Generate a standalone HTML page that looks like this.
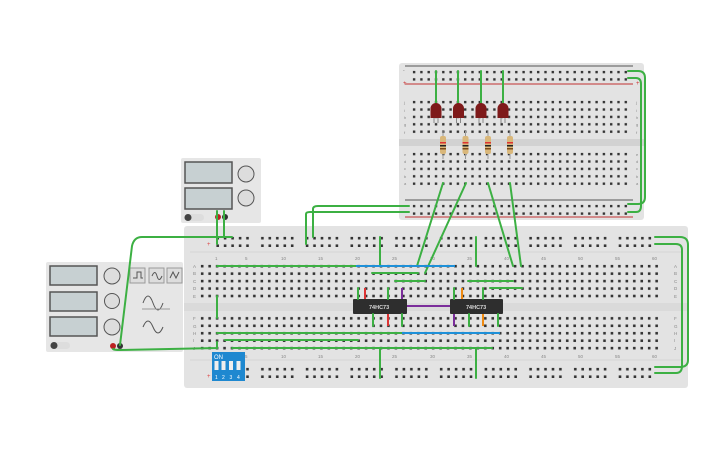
<!DOCTYPE html>
<html><head><meta charset="utf-8"><style>
html,body{margin:0;padding:0;background:#fff;width:725px;height:453px;overflow:hidden}
svg{display:block}
text{font-family:"Liberation Sans",sans-serif}
</style></head><body>
<svg width="725" height="453" viewBox="0 0 725 453" xmlns="http://www.w3.org/2000/svg">
<defs>
<pattern id="mg" x="198.5" y="262.5" width="7.45" height="7.45" patternUnits="userSpaceOnUse"><rect x="2.4" y="2.4" width="2.6" height="2.6" fill="#333"/></pattern>
<pattern id="mr" x="214" y="234.5" width="44.7" height="7.5" patternUnits="userSpaceOnUse">
<rect x="2.4" y="2.4" width="2.6" height="2.6" fill="#333"/><rect x="9.8" y="2.4" width="2.6" height="2.6" fill="#333"/><rect x="17.3" y="2.4" width="2.6" height="2.6" fill="#333"/><rect x="24.8" y="2.4" width="2.6" height="2.6" fill="#333"/><rect x="32.2" y="2.4" width="2.6" height="2.6" fill="#333"/></pattern>
<pattern id="mr2" x="214" y="365.5" width="44.7" height="7.5" patternUnits="userSpaceOnUse">
<rect x="2.4" y="2.4" width="2.6" height="2.6" fill="#333"/><rect x="9.8" y="2.4" width="2.6" height="2.6" fill="#333"/><rect x="17.3" y="2.4" width="2.6" height="2.6" fill="#333"/><rect x="24.8" y="2.4" width="2.6" height="2.6" fill="#333"/><rect x="32.2" y="2.4" width="2.6" height="2.6" fill="#333"/></pattern>
<pattern id="sgR" x="410.5" y="68.5" width="7.3" height="7.3" patternUnits="userSpaceOnUse"><rect x="2.4" y="2.4" width="2.4" height="2.4" fill="#333"/></pattern>
<pattern id="sgA" x="410.5" y="98.5" width="7.3" height="7.4" patternUnits="userSpaceOnUse"><rect x="2.4" y="2.4" width="2.4" height="2.4" fill="#333"/></pattern>
<pattern id="sgB" x="410.5" y="150.5" width="7.3" height="7.4" patternUnits="userSpaceOnUse"><rect x="2.4" y="2.4" width="2.4" height="2.4" fill="#333"/></pattern>
<pattern id="sgR2" x="410.5" y="202.5" width="7.3" height="7.5" patternUnits="userSpaceOnUse"><rect x="2.4" y="2.4" width="2.4" height="2.4" fill="#333"/></pattern>
</defs>

<!-- small breadboard -->
<rect x="399" y="63" width="245" height="157" rx="3" fill="#e3e3e3"/>
<rect x="399" y="139" width="245" height="7" fill="#d2d2d2"/>
<line x1="405" y1="66" x2="633" y2="66" stroke="#555" stroke-width="1"/>
<line x1="405" y1="84" x2="633" y2="84" stroke="#c03030" stroke-width="1"/>
<line x1="405" y1="200" x2="633" y2="200" stroke="#555" stroke-width="1"/>
<line x1="405" y1="217" x2="633" y2="217" stroke="#c03030" stroke-width="1"/>
<rect x="410.5" y="68.5" width="219" height="14.6" fill="url(#sgR)"/>
<rect x="410.5" y="98.5" width="219" height="37" fill="url(#sgA)"/>
<rect x="410.5" y="150.5" width="219" height="37" fill="url(#sgB)"/>
<rect x="410.5" y="202.5" width="219" height="15" fill="url(#sgR2)"/>
<text x="403" y="72" font-size="5" fill="#777">-</text><text x="403" y="85" font-size="6" fill="#c33">+</text>
<text x="636" y="72" font-size="5" fill="#777">-</text><text x="636" y="85" font-size="6" fill="#c33">+</text>
<g font-size="4" fill="#888"><text x="404" y="104">j</text><text x="404" y="112">i</text><text x="404" y="119">h</text><text x="404" y="126">g</text><text x="404" y="134">f</text><text x="404" y="156">e</text><text x="404" y="163">d</text><text x="404" y="170">c</text><text x="404" y="178">b</text><text x="404" y="185">a</text>
<text x="636" y="104">j</text><text x="636" y="112">i</text><text x="636" y="119">h</text><text x="636" y="126">g</text><text x="636" y="134">f</text><text x="636" y="156">e</text><text x="636" y="163">d</text><text x="636" y="170">c</text><text x="636" y="178">b</text><text x="636" y="185">a</text></g>

<!-- main breadboard -->
<rect x="184" y="226" width="504" height="162" rx="3" fill="#e3e3e3"/>
<line x1="190" y1="252" x2="682" y2="252" stroke="#d6d6d6"/>
<line x1="190" y1="360" x2="682" y2="360" stroke="#d6d6d6"/>
<rect x="184" y="303" width="504" height="8" fill="#dadada"/>
<rect x="214" y="234.5" width="448" height="15" fill="url(#mr)"/>
<rect x="214" y="365.5" width="448" height="15" fill="url(#mr2)"/>
<rect x="198.5" y="262.5" width="463" height="37" fill="url(#mg)"/>
<rect x="198.5" y="314.5" width="463" height="37" fill="url(#mg)"/>
<text x="207" y="246" font-size="6" fill="#d44">+</text><text x="207" y="378" font-size="6" fill="#d44">+</text>
<g font-size="4.5" fill="#888">
<text x="215" y="260">1</text><text x="245" y="260">5</text><text x="281" y="260">10</text><text x="318" y="260">15</text><text x="355" y="260">20</text><text x="392" y="260">25</text><text x="430" y="260">30</text><text x="467" y="260">35</text><text x="504" y="260">40</text><text x="541" y="260">45</text><text x="578" y="260">50</text><text x="615" y="260">55</text><text x="652" y="260">60</text>
<text x="245" y="358">5</text><text x="281" y="358">10</text><text x="318" y="358">15</text><text x="355" y="358">20</text><text x="392" y="358">25</text><text x="430" y="358">30</text><text x="467" y="358">35</text><text x="504" y="358">40</text><text x="541" y="358">45</text><text x="578" y="358">50</text><text x="615" y="358">55</text><text x="652" y="358">60</text>
<text x="193" y="268">A</text><text x="193" y="275">B</text><text x="193" y="283">C</text><text x="193" y="290">D</text><text x="193" y="298">E</text><text x="193" y="320">F</text><text x="193" y="328">G</text><text x="193" y="335">H</text><text x="193" y="342">I</text><text x="193" y="350">J</text>
<text x="674" y="268">A</text><text x="674" y="275">B</text><text x="674" y="283">C</text><text x="674" y="290">D</text><text x="674" y="298">E</text><text x="674" y="320">F</text><text x="674" y="328">G</text><text x="674" y="335">H</text><text x="674" y="342">I</text><text x="674" y="350">J</text></g>

<!-- top power supply -->
<rect x="181" y="158" width="80" height="65" rx="2" fill="#e6e6e6"/>
<rect x="185" y="162" width="47" height="21" fill="#c7d0d2" stroke="#555" stroke-width="1.5"/>
<rect x="185" y="188" width="47" height="21" fill="#c7d0d2" stroke="#555" stroke-width="1.5"/>
<circle cx="246" cy="174" r="8" fill="#ddd" stroke="#555"/>
<circle cx="246" cy="198" r="8" fill="#ddd" stroke="#555"/>
<rect x="184" y="214" width="20" height="7" rx="3.5" fill="#ddd"/><circle cx="188" cy="217.5" r="3.5" fill="#444"/>
<circle cx="218" cy="217" r="3" fill="#b22"/><circle cx="225" cy="217" r="3" fill="#333"/>

<!-- bottom function generator -->
<rect x="46" y="262" width="137" height="90" rx="2" fill="#e6e6e6"/>
<rect x="50" y="266" width="47" height="19" fill="#c7d0d2" stroke="#555" stroke-width="1.5"/>
<rect x="50" y="292" width="47" height="19" fill="#c7d0d2" stroke="#555" stroke-width="1.5"/>
<rect x="50" y="317" width="47" height="19" fill="#c7d0d2" stroke="#555" stroke-width="1.5"/>
<circle cx="112" cy="276" r="8" fill="#ddd" stroke="#555"/>
<circle cx="112" cy="301" r="7.5" fill="#ddd" stroke="#555"/>
<circle cx="112" cy="327" r="8" fill="#ddd" stroke="#555"/>
<rect x="130" y="268" width="15" height="15" fill="#ddd" stroke="#999"/>
<rect x="149" y="268" width="15" height="15" fill="#ddd" stroke="#999"/>
<rect x="167" y="268" width="15" height="15" fill="#ddd" stroke="#999"/>
<path d="M133 278h4v-6h4v6h2" fill="none" stroke="#555"/>
<path d="M152 276q3-7 5 0t5 0" fill="none" stroke="#555"/>
<path d="M170 278l3-6 3 6 3-6" fill="none" stroke="#555"/>
<path d="M143 303q5-14 10 0t10 0" fill="none" stroke="#555"/><line x1="142" y1="309" x2="170" y2="309" stroke="#999"/>
<path d="M143 327q5-12 10 0t10 0" fill="none" stroke="#555"/>
<rect x="50" y="342" width="20" height="7" rx="3.5" fill="#ddd"/><circle cx="54" cy="345.5" r="3.5" fill="#444"/>
<circle cx="113" cy="346" r="3" fill="#b22"/><circle cx="120" cy="346" r="3" fill="#333"/>

<!-- DIP switch -->
<rect x="212" y="352" width="33" height="29" fill="#1e88d0"/>
<text x="214" y="359" font-size="6" fill="#fff">ON</text>
<g fill="#eee"><rect x="214.5" y="361" width="4" height="9"/><rect x="221.5" y="361" width="4" height="9"/><rect x="229" y="361" width="4" height="9"/><rect x="236.5" y="361" width="4" height="9"/></g>
<g font-size="5" fill="#fff"><text x="215" y="379">1</text><text x="222" y="379">2</text><text x="229.5" y="379">3</text><text x="237" y="379">4</text></g>

<!-- chips -->
<rect x="353" y="299" width="54" height="15" rx="1" fill="#2e2e2e"/>
<text x="369" y="309" font-size="5.5" fill="#ddd" font-weight="bold">74HC73</text>
<rect x="450" y="299" width="53" height="15" rx="1" fill="#2e2e2e"/>
<text x="466" y="309" font-size="5.5" fill="#ddd" font-weight="bold">74HC73</text>

<!-- wires -->
<g fill="none" stroke="#3cb043" stroke-width="2" stroke-linecap="round">
<path d="M217 211V244M224 211V237"/>
<path d="M120 345L132 246Q134 237 142 237H232"/>
<path d="M113 349Q114 350 120 350L217 348V342"/>
<path d="M232 348H492"/>
<path d="M306 244V214Q306 212 310 212H409M313 237V209Q313 206 318 206H409"/>
<path d="M217 266H356"/>
<path d="M380 237V266M372 273H418M395 281H425"/>
<path d="M443 183L417 266M466 183L425 273M488 183L513 266M510 183L521 266"/>
<path d="M476 237V266M468 281H513M490 288H522"/>
<path d="M655 237H680Q688 237 688 245V360Q688 367 680 367H655"/>
<path d="M655 244H676Q682 244 682 250V366Q682 373 676 373H655"/>
<path d="M628 71H638Q645 71 645 78V197Q645 204 638 204H628"/>
<path d="M628 78H636Q641 78 641 84V206Q641 212 636 212H628"/>
<path d="M436 71V103M458 71V103M481 71V103M503 71V103"/>
<path d="M217 296V318M217 333H402M225 340H358"/>
<path d="M380 348V378M476 348V378"/>
<path d="M358 288V299M388 288V299M373 314V326M402 314V326"/>
<path d="M454 288V299M483 288V299M469 314V326M498 314V326"/>
</g>
<g fill="none" stroke-width="2">
<path d="M356 266H455" stroke="#1e90d8"/>
<path d="M402 333H500" stroke="#1e90d8"/>
<path d="M365 288V299M388 314V326" stroke="#d33"/>
<path d="M462 288V299M483 314V326" stroke="#f08a10"/>
<path d="M402 288V299M407 306H450M454 314V326" stroke="#7b2d9b"/>
</g>

<!-- LEDs & resistors -->
<g>
<g id="led"><path d="M430.5 118V108.5a5.5 5.5 0 0 1 11 0V118z" fill="#7e1a1a"/><path d="M434 118v5M438 118v5" stroke="#888"/></g>
<use href="#led" x="22.5"/><use href="#led" x="45"/><use href="#led" x="67"/>
<g id="res"><line x1="443" y1="131" x2="443" y2="159" stroke="#999"/><rect x="440" y="136" width="6" height="18" rx="2" fill="#d9b77a"/><rect x="440" y="142" width="6" height="1.5" fill="#d33"/><rect x="440" y="145" width="6" height="1.5" fill="#222"/><rect x="440" y="148" width="6" height="1.5" fill="#7a4a1a"/></g>
<use href="#res" x="22.5"/><use href="#res" x="45"/><use href="#res" x="67"/>
</g>
</svg>
</body></html>
